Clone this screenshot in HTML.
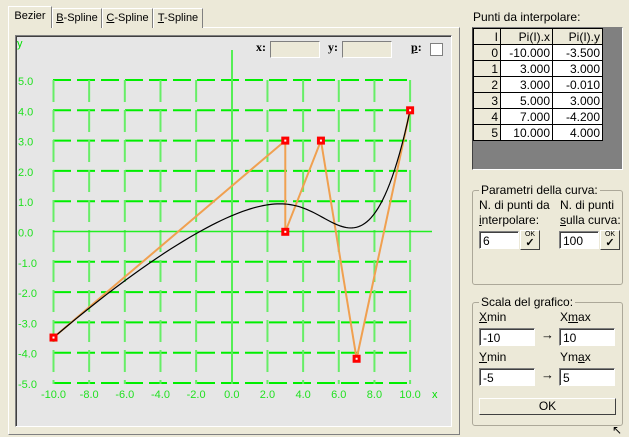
<!DOCTYPE html>
<html><head><meta charset="utf-8"><style>
body{margin:0;width:629px;height:435px;background:#ece9d8;font-family:"Liberation Sans",sans-serif;font-size:11px;position:relative;overflow:hidden;color:#000}
.a{position:absolute}
.tab{position:absolute;top:8px;height:19px;border:1px solid #fff;border-right-color:#808080;border-bottom:none;line-height:19px;text-align:center;background:#ece9d8}
.edit{position:absolute;background:#fff;border:1px solid;border-color:#808080 #fff #fff #808080;box-shadow:inset 1px 1px 0 #404040;height:18px;line-height:18px;padding-left:3px;box-sizing:border-box;font-size:12px}
.grp{position:absolute;border:1px solid #aca899;border-radius:3px}
.grp .t{position:absolute;top:-8px;left:6px;background:#ece9d8;padding:0 2px;font-size:12px}
table{border-collapse:collapse;font-size:12px}
td{border:1px solid #000;height:15px;padding:0 2px;text-align:right;background:#fff}
td.h{background:#ece9d8}
</style></head><body>
<div class="a" style="left:8px;top:27px;width:450px;height:406px;border:1px solid #fff;border-right-color:#808080;border-bottom-color:#808080"></div>
<div class="tab" style="left:8px;top:6px;height:21px;width:42px;background:#ece9d8;z-index:2">Bezier</div>
<div class="tab" style="left:52px;width:48px"><u>B</u>-Spline</div>
<div class="tab" style="left:102px;width:49px"><u>C</u>-Spline</div>
<div class="tab" style="left:153px;width:48px"><u>T</u>-Spline</div>
<div class="a" style="left:15px;top:35px;width:435px;height:390px;background:#e6e6e6;border:1px solid;border-color:#808080 #fff #fff #808080;box-shadow:inset 1px 1px 0 #404040"></div>
<svg class="a" style="left:0;top:0" width="460" height="435" id="s">
<text x="17" y="47" fill="#00e000" font-size="11" font-family="Liberation Sans">y</text>
<text x="432" y="398" fill="#00e000" font-size="11" font-family="Liberation Sans">x</text>
<g id="g"></g>
</svg>
<div class="a" style="left:256px;top:40px;font-weight:bold;font-family:'Liberation Serif',serif;font-size:12px">x:</div>
<div class="a" style="left:270px;top:41px;width:48px;height:15px;background:#ece9d8;border:1px solid;border-color:#808080 #fff #fff #808080"></div>
<div class="a" style="left:328px;top:40px;font-weight:bold;font-family:'Liberation Serif',serif;font-size:12px">y:</div>
<div class="a" style="left:342px;top:41px;width:48px;height:15px;background:#ece9d8;border:1px solid;border-color:#808080 #fff #fff #808080"></div>
<div class="a" style="left:411px;top:40px;font-weight:bold;font-family:'Liberation Serif',serif;font-size:12px"><u>p</u>:</div>
<div class="a" style="left:430px;top:43px;width:11px;height:11px;background:#fff;border:1px solid #808080"></div>

<div class="a" style="left:473px;top:10px;font-size:12px">Punti da interpolare:</div>
<div class="a" style="left:472px;top:27px;width:149px;height:141px;background:#808080;border:1px solid;border-color:#808080 #fff #fff #404040"></div>
<table class="a" style="left:473px;top:28px">
<tr><td class="h" style="width:22px">I</td><td class="h" style="width:47px">Pi(I).x</td><td class="h" style="width:45px">Pi(I).y</td></tr>
<tr><td class="h">0</td><td>-10.000</td><td>-3.500</td></tr>
<tr><td class="h">1</td><td>3.000</td><td>3.000</td></tr>
<tr><td class="h">2</td><td>3.000</td><td>-0.010</td></tr>
<tr><td class="h">3</td><td>5.000</td><td>3.000</td></tr>
<tr><td class="h">4</td><td>7.000</td><td>-4.200</td></tr>
<tr><td class="h">5</td><td>10.000</td><td>4.000</td></tr>
</table>

<div class="grp" style="left:472px;top:190px;width:149px;height:93px"><span class="t">Parametri della curva:</span></div>
<div class="a" style="left:479px;top:198px;font-size:12px;line-height:15px">N. di punti da<br><u>i</u>nterpolare:</div>
<div class="a" style="left:560px;top:198px;font-size:12px;line-height:15px">N. di punti<br><u>s</u>ulla curva:</div>
<div class="edit" style="left:479px;top:231px;width:40px">6</div>
<div class="a" style="left:520px;top:230px;width:18px;height:18px;border:1px solid;border-color:#fff #404040 #404040 #fff;font-size:7px;line-height:8px;text-align:center">OK<br><b style="font-size:11px">✓</b></div>
<div class="edit" style="left:559px;top:231px;width:40px">100</div>
<div class="a" style="left:600px;top:230px;width:18px;height:18px;border:1px solid;border-color:#fff #404040 #404040 #fff;font-size:7px;line-height:8px;text-align:center">OK<br><b style="font-size:11px">✓</b></div>

<div class="grp" style="left:472px;top:302px;width:149px;height:122px"><span class="t">Scala del grafico:</span></div>
<div class="a" style="left:479px;top:310px;font-size:12px"><u>X</u>min</div>
<div class="a" style="left:560px;top:310px;font-size:12px">X<u>m</u>ax</div>
<div class="edit" style="left:479px;top:328px;width:56px">-10</div>
<div class="a" style="left:541px;top:327px;font-size:13px">→</div>
<div class="edit" style="left:559px;top:328px;width:56px">10</div>
<div class="a" style="left:479px;top:350px;font-size:12px"><u>Y</u>min</div>
<div class="a" style="left:560px;top:350px;font-size:12px">Ym<u>a</u>x</div>
<div class="edit" style="left:479px;top:368px;width:56px">-5</div>
<div class="a" style="left:541px;top:367px;font-size:13px">→</div>
<div class="edit" style="left:559px;top:368px;width:56px">5</div>
<div class="a" style="left:479px;top:398px;width:135px;height:15px;border:1px solid;border-color:#fff #404040 #404040 #fff;text-align:center;line-height:15px;font-size:12px">OK</div>
<div class="a" style="left:612px;top:423px;font-size:12px">↖</div>

<script>
var ns="http://www.w3.org/2000/svg",g=document.getElementById("g");
function X(v){return 53.5+(v+10)*17.83}function Y(v){return 231.5-v*30.3}
function el(t,a,tx){var e=document.createElementNS(ns,t);for(var k in a)e.setAttribute(k,a[k]);if(tx)e.textContent=tx;g.appendChild(e);return e}
for(var i=-5;i<=5;i++){if(i==0)continue;el("line",{x1:53,x2:411,y1:Y(i),y2:Y(i),stroke:"#00ee00","stroke-width":2,"stroke-dasharray":"18 6"});
el("text",{x:18,y:Y(i)+5,fill:"#22e022","font-size":11,"font-family":"Liberation Sans"},(i<0?"-":"")+Math.abs(i)+".0")}
for(var i=-10;i<=10;i+=2){if(i!=0)el("line",{x1:X(i),x2:X(i),y1:80,y2:384,stroke:"#66ee66","stroke-width":2,"stroke-dasharray":"22 8"});
el("text",{x:X(i),y:398,fill:"#22e022","font-size":11,"text-anchor":"middle","font-family":"Liberation Sans"},(i<0?"-":"")+Math.abs(i)+".0")}
el("line",{x1:53,x2:432,y1:231.5,y2:231.5,stroke:"#22ee22","stroke-width":1.5});
el("line",{x1:232,x2:232,y1:50,y2:384,stroke:"#55ee55","stroke-width":2});
el("text",{x:18,y:Y(0)+5,fill:"#22e022","font-size":11,"font-family":"Liberation Sans"},"0.0");
var P=[[-10,-3.5],[3,3],[3,-0.01],[5,3],[7,-4.2],[10,4]],C=[1,5,10,10,5,1];
el("polyline",{points:P.map(function(p){return X(p[0])+","+Y(p[1])}).join(" "),fill:"none",stroke:"#f0a050","stroke-width":2});
var pts=[];for(var s=0;s<=100;s++){var t=s/100,x=0,y=0;for(var i=0;i<6;i++){var b=C[i]*Math.pow(t,i)*Math.pow(1-t,5-i);x+=b*P[i][0];y+=b*P[i][1]}pts.push(X(x)+","+Y(y))}
el("polyline",{points:pts.join(" "),fill:"none",stroke:"#000","stroke-width":1.2});
P.forEach(function(p){el("rect",{x:X(p[0])-4,y:Y(p[1])-4,width:8,height:8,fill:"#f00"});el("rect",{x:X(p[0])-1,y:Y(p[1])-1,width:2,height:2,fill:"#fff"})});
</script>
</body></html>
